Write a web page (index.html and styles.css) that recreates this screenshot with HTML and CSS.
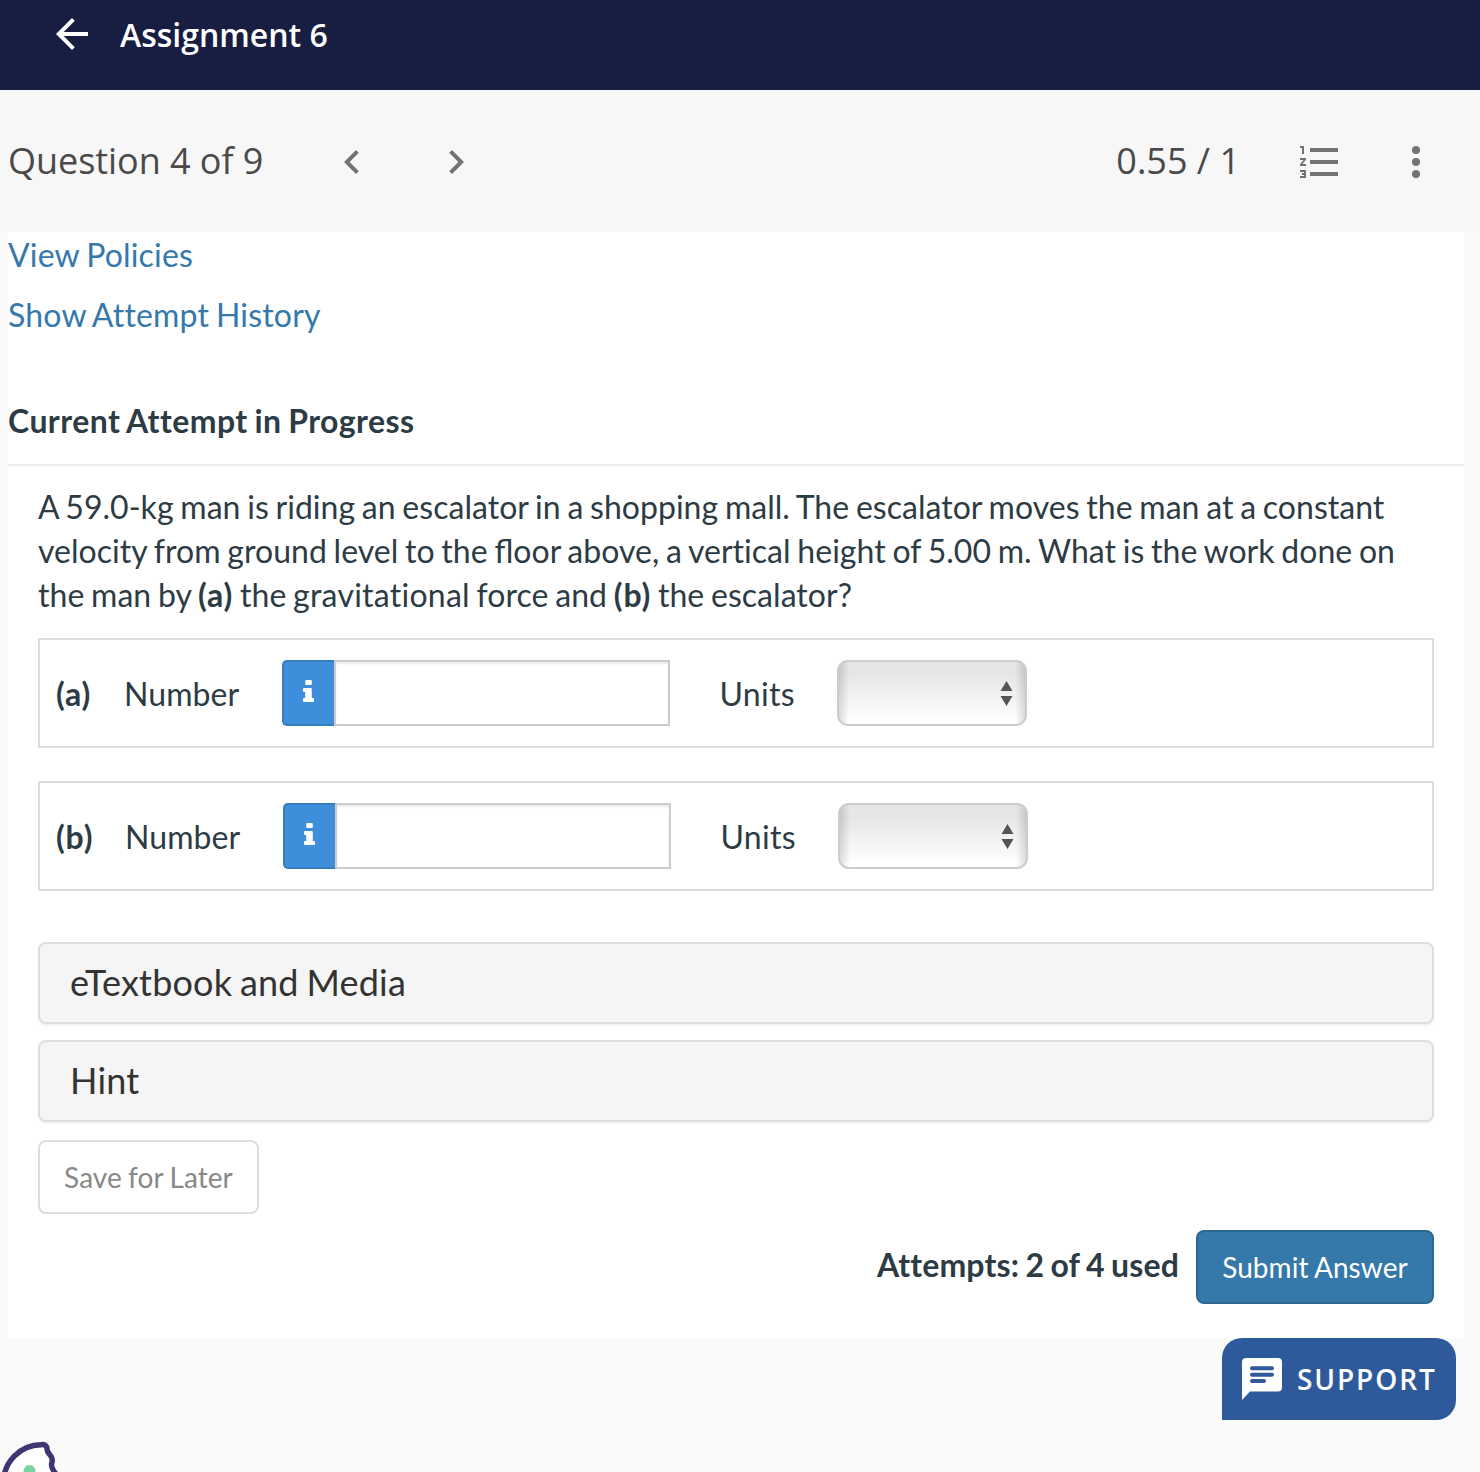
FILE: index.html
```html
<!DOCTYPE html>
<html lang="en">
<head>
<meta charset="utf-8">
<title>Assignment 6</title>
<link rel="stylesheet" href="styles.css">
</head>
<body>
<header class="topbar">
  <svg class="icon" viewBox="0 0 24 24"><path d="M20 11H7.83l5.59-5.59L12 4l-8 8 8 8 1.41-1.41L7.83 13H20v-2z"/></svg>
  <h1 class="topbar-title">Assignment 6</h1>
</header>
<nav class="question-bar">
  <span class="question-count">Question 4 of 9</span>
  <svg class="icon prev" viewBox="0 0 24 24"><path d="M15.41 7.41L14 6l-6 6 6 6 1.41-1.41L10.83 12z"/></svg>
  <svg class="icon next" viewBox="0 0 24 24"><path d="M10 6L8.59 7.41 13.17 12l-4.58 4.59L10 18l6-6z"/></svg>
  <span class="score">0.55 / 1</span>
  <svg class="icon list" viewBox="0 0 24 24"><path d="M2 17h2v.5H3v1h1v.5H2v1h3v-4H2v1zm1-9h1V4H2v1h1v3zm-1 3h1.8L2 13.1v.9h3v-1H3.2L5 10.9V10H2v1zm5-6v2h14V5H7zm0 14h14v-2H7v2zm0-6h14v-2H7v2z"/></svg>
  <svg class="icon more" viewBox="0 0 24 24"><circle cx="12" cy="6" r="2"/><circle cx="12" cy="12" r="2"/><circle cx="12" cy="18" r="2"/></svg>
</nav>
<main class="sheet">
  <div class="links">
    <a class="link">View Policies</a>
    <a class="link">Show Attempt History</a>
  </div>
  <h2 class="attempt-title">Current Attempt in Progress</h2>
  <section class="question">
    <p class="prompt">A 59.0-kg man is riding an escalator in a shopping mall. The escalator moves the man at a constant velocity from ground level to the <span class="ligature">fl</span>oor above, a vertical height of 5.00 m. What is the work done on the man by <b>(a)</b> the <span class="loose">gravitational</span> force and <b>(b)</b> the escalator?</p>
    <div class="answer">
      <b class="part">(a)</b>
      <span class="number-label">Number</span>
      <span class="info"><svg class="info-icon" viewBox="0 0 12 22"><path d="M3.2 0h4.600q1 0 1 1v3q0 1-1 1H3.200q-1 0-1-1V1q0-1 1-1zM1 8h6.800q1 0 1 1v9H10q1 0 1 1v2q0 1-1 1H1q-1 0-1-1v-2q0-1 1-1h1.200v-6H1q-1 0-1-1V9q0-1 1-1z"/></svg></span>
      <input class="number" type="text" aria-label="Number">
      <span class="units-label">Units</span>
      <span class="units"><svg class="arrows" viewBox="0 0 12 25"><path d="M6 0l6 10H0zM0 15h12L6 25z"/></svg></span>
    </div>
    <div class="answer">
      <b class="part">(b)</b>
      <span class="number-label">Number</span>
      <span class="info"><svg class="info-icon" viewBox="0 0 12 22"><path d="M3.2 0h4.600q1 0 1 1v3q0 1-1 1H3.200q-1 0-1-1V1q0-1 1-1zM1 8h6.800q1 0 1 1v9H10q1 0 1 1v2q0 1-1 1H1q-1 0-1-1v-2q0-1 1-1h1.200v-6H1q-1 0-1-1V9q0-1 1-1z"/></svg></span>
      <input class="number" type="text" aria-label="Number">
      <span class="units-label">Units</span>
      <span class="units"><svg class="arrows" viewBox="0 0 12 25"><path d="M6 0l6 10H0zM0 15h12L6 25z"/></svg></span>
    </div>
    <div class="panels">
      <div class="panel">eTextbook and Media</div>
      <div class="panel">Hint</div>
    </div>
    <button class="button save">Save for Later</button>
    <div class="submit-row">
      <b class="attempts">Attempts: 2 of 4 used</b>
      <button class="button submit">Submit Answer</button>
    </div>
  </section>
</main>
<a class="support">
  <svg class="support-icon" viewBox="0 0 40 42"><path class="bubble" d="M4 0h32q4 0 4 4v25.500q0 4-4 4H8L0 42V4q0-4 4-4z"/><path class="bubble-lines" d="M10 10.300h20M10 16.700h20M10 23h12"/></svg>
  <span class="support-text">SUPPORT</span>
</a>
<svg class="cookie" viewBox="0 0 84 32"><path class="cookie-body" d="M3.500 43A37.900 37.900 0 0 1 41 4.700Q47 4 47 9C47 15 54 15 52 22Q50 27 56 34"/><circle class="cookie-chip" cx="29.500" cy="31" r="6"/></svg>
</body>
</html>
```
FILE: styles.css
```css
* { box-sizing: border-box; }
body {
  margin: 0;
  height: 1472px;
  overflow: hidden;
  background: #fafafa;
  color: #2d3b45;
  font: 32px/44px Lato, sans-serif;
  font-variant-ligatures: no-common-ligatures;
  word-spacing: -1.5px;
}
.ligature { font-variant-ligatures: common-ligatures; letter-spacing: 0; }
.icon { width: 48px; height: 48px; flex: none; fill: #737373; }
.topbar {
  display: flex;
  align-items: center;
  gap: 24px;
  height: 90px;
  padding: 0 48px 22px;
  background: #171e41;
  word-spacing: 0;
}
.topbar .icon { fill: #fff; }
.topbar-title { margin: 0; padding-top: 1px; color: #fff; font: 600 32px/44px "Open Sans", sans-serif; }
.question-bar {
  display: flex;
  align-items: center;
  height: 142px;
  padding: 2px 40px 0 8px;
  background: #f7f7f7;
  color: #4a4a4a;
  font: 36px/48px "Open Sans", sans-serif;
  word-spacing: 0;
}
.question-count { width: 320px; padding-bottom: 2px; letter-spacing: -.05px; }
.next { margin-left: 56px; }
.score { margin-left: auto; padding-bottom: 2px; }
.list { margin-left: 56px; }
.more { margin-left: 48px; }
.sheet {
  height: 1106px;
  margin: 0 16px 0 8px;
  padding-top: 1px;
  background: #fff;
}
.links { display: flex; flex-direction: column; gap: 16px; letter-spacing: .18px; }
.link { color: #3578ab; }
.attempt-title {
  margin: 62px 0 0;
  padding-bottom: 21px;
  border-bottom: 2px solid #eee;
  font-size: 32px;
  font-weight: 700;
  letter-spacing: .44px;
}
.question { padding: 19px 30px 0; }
.prompt { margin: 0 0 21px; letter-spacing: .03px; }
.prompt b { letter-spacing: .9px; }
.loose { letter-spacing: .25px; }
.answer {
  display: flex;
  align-items: center;
  height: 110px;
  margin-bottom: 33px;
  padding-left: 16px;
  border: 2px solid #ddd;
}
.part { width: 36px; margin-right: 32px; padding-top: 1px; letter-spacing: .8px; }
.answer + .answer .part { width: 37px; }
.number-label { width: 115px; padding-top: 1px; letter-spacing: .1px; }
.info {
  display: flex;
  align-items: center;
  justify-content: center;
  width: 52px;
  height: 66px;
  margin-left: 43px;
  border: 2px solid #357ebd;
  border-right: 0;
  border-radius: 5px 0 0 5px;
  background: #3f8edc;
}
.info-icon { width: 12px; height: 22px; margin: 0 0 4px; fill: #fff; }
.number {
  width: 336px;
  height: 66px;
  border: 2px solid #ccc;
  background: #fff;
  box-shadow: inset 0 2px 2px rgba(0, 0, 0, .075);
}
.units-label { width: 75px; margin-left: 49.5px; padding-top: 1px; letter-spacing: .3px; }
.units {
  display: flex;
  align-items: center;
  justify-content: flex-end;
  width: 190px;
  height: 66px;
  margin-left: 42.5px;
  padding-right: 12px;
  border: 2px solid #ccc;
  border-radius: 11px;
  background: linear-gradient(90deg, #0002, #0000 10px, #0000 calc(100% - 10px), #0002), linear-gradient(#e6e6e6 20%, #fff 95%);
}
.arrows { width: 13px; height: 25px; fill: #555; }
.panels { display: flex; flex-direction: column; gap: 16px; margin-top: 51px; }
.panel {
  height: 82px;
  padding: 16px 30px;
  border: 2px solid #ddd;
  border-radius: 8px;
  background: #f5f5f5;
  box-shadow: 0 2px 2px rgba(0, 0, 0, .05);
  color: #333;
  font-size: 36px;
  letter-spacing: .17px;
}
.button {
  height: 74px;
  padding: 0;
  border: 2px solid #ddd;
  border-radius: 8px;
  font: 28px/40px Lato, sans-serif;
  letter-spacing: .08px;
  word-spacing: -1px;
}
.save { display: block; width: 221px; margin-top: 18px; background: #fff; color: #888; }
.submit-row { display: flex; justify-content: flex-end; gap: 17px; margin-top: 16px; }
.attempts { padding-top: 13px; letter-spacing: .13px; }
.submit { width: 238px; border-color: #2d6891; background: #3578aa; color: #fff; }
.support {
  position: absolute;
  left: 1222px;
  top: 1338px;
  display: flex;
  align-items: center;
  gap: 15px;
  width: 234px;
  height: 82px;
  padding-left: 20px;
  border-radius: 20px 20px 20px 0;
  background: #2e5a9b;
  color: #fff;
}
.support-icon { width: 40px; height: 42px; margin-bottom: 1px; }
.bubble { fill: #fff; }
.bubble-lines { fill: none; stroke: #2e5a9b; stroke-width: 4; stroke-linecap: round; }
.support-text { padding-bottom: 1px; font: 600 28px/40px "Open Sans", sans-serif; letter-spacing: 1.9px; }
.cookie { position: absolute; left: 0; top: 1440px; width: 84px; height: 32px; }
.cookie-body { fill: #fff; stroke: #3d3672; stroke-width: 5.500; }
.cookie-chip { fill: #78d19f; }
```
